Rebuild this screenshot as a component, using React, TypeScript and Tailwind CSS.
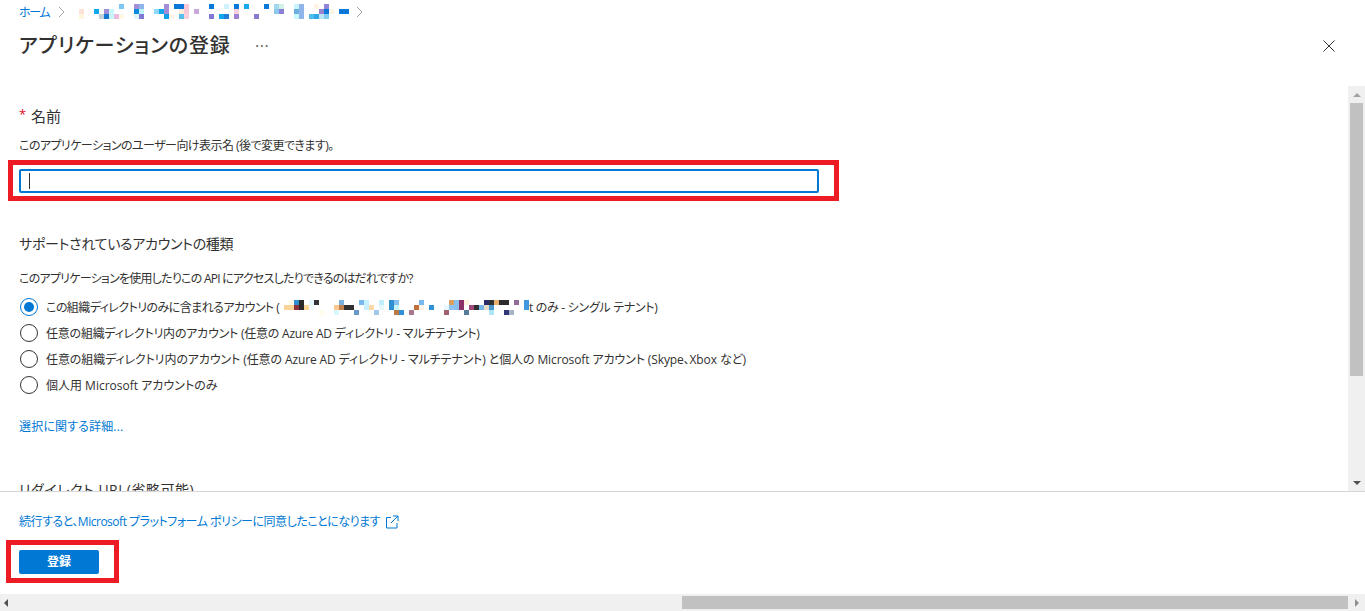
type Cell = [number, number, string];

// pixelated tenant name in the breadcrumb (x offset from 79, row 0-2)
const crumbCells: Cell[] = [
  [40, 0, "#7cc8f0"], [55, 0, "#a48fd6"], [60, 0, "#8fb4ea"], [85, 0, "#a48fd6"], [95, 0, "#0a78d8"], [100, 0, "#0a78d8"], [105, 0, "#f8c8d8"],
  [130, 0, "#0a78d8"], [145, 0, "#d0f2fc"], [155, 0, "#0a78d8"], [165, 0, "#18a8ec"], [185, 0, "#0a78d8"], [195, 0, "#a4d8ee"], [200, 0, "#d0f4e4"],
  [215, 0, "#c8f4fc"], [220, 0, "#8fb4ea"], [235, 0, "#fdf2e4"], [245, 0, "#9484d8"],
  [0, 1, "#fde2d8"], [15, 1, "#10a8ec"], [25, 1, "#a48fd6"], [30, 1, "#c8f4fc"], [55, 1, "#0a8ae0"], [60, 1, "#c0f2fc"],
  [75, 1, "#8cd8f8"], [80, 1, "#10a8ec"], [85, 1, "#a48fd6"], [100, 1, "#fdeedc"], [105, 1, "#f8c8d8"], [115, 1, "#c8a8dc"],
  [155, 1, "#f8d0e0"], [195, 1, "#8cc8ec"], [200, 1, "#8a80d8"], [215, 1, "#6cb0e0"], [220, 1, "#8fb4ea"], [240, 1, "#9a84d0"], [245, 1, "#0a78d8"], [250, 1, "#fdf6e4"], [260, 1, "#0a78d8"], [265, 1, "#0a78d8"],
  [0, 2, "#fff6e0"], [20, 2, "#c4d0d8"], [25, 2, "#1478d0"], [30, 2, "#c8f4fc"], [35, 2, "#ecb8dc"], [40, 2, "#fff8e4"],
  [55, 2, "#dcf6fc"], [60, 2, "#8078d4"], [85, 2, "#10a0e8"], [90, 2, "#fff6e8"], [100, 2, "#58bce8"], [105, 2, "#f8d0e0"],
  [130, 2, "#8078d4"], [140, 2, "#10a8ec"], [145, 2, "#2080d8"], [155, 2, "#a080d0"], [175, 2, "#8a78d0"],
  [215, 2, "#c8f8fc"], [220, 2, "#8fb4ea"], [230, 2, "#50bcec"], [235, 2, "#30a8e8"], [240, 2, "#b8e4f4"], [245, 2, "#80ccf0"],
];

// pixelated tenant name in the first radio label (x offset from 284)
const tenantCells: Cell[] = [
  [5, 0, "#fdf6e4"], [10, 0, "#2f8fd0"], [15, 0, "#2a2a2a"], [25, 0, "#e4f8fc"], [30, 0, "#333333"],
  [55, 0, "#78b0e0"], [75, 0, "#78b8f0"], [80, 0, "#c8f0fc"], [95, 0, "#c0f0fc"], [105, 0, "#2f8fd0"], [110, 0, "#84c0f0"], [135, 0, "#78b8f0"],
  [165, 0, "#d8a060"], [170, 0, "#88c0f0"], [175, 0, "#8c3068"], [180, 0, "#fdf2dc"], [200, 0, "#2c2c68"], [205, 0, "#303030"], [210, 0, "#e8b070"], [215, 0, "#2c2c2c"], [220, 0, "#2c2c2c"], [230, 0, "#906c98"], [240, 0, "#4098e0"],
  [0, 1, "#fdd498"], [5, 1, "#fdd498"], [10, 1, "#8e2f3a"], [15, 1, "#2a2a2a"], [20, 1, "#fdd498"], [25, 1, "#f0fafc"],
  [50, 1, "#fdc890"], [55, 1, "#c08050"], [60, 1, "#303030"], [65, 1, "#303030"], [80, 1, "#c8f0fc"], [85, 1, "#fdd8a8"], [95, 1, "#e4f8fc"], [105, 1, "#2f8fd0"], [110, 1, "#c8f4fc"],
  [130, 1, "#c07038"], [135, 1, "#fdf2e4"], [145, 1, "#3090d8"], [160, 1, "#e8f8fc"], [165, 1, "#90c4f0"], [170, 1, "#88c0f0"], [175, 1, "#8c3068"], [185, 1, "#a04878"], [190, 1, "#303030"], [195, 1, "#78b8e8"], [200, 1, "#e8dcc8"], [205, 1, "#4898d0"], [240, 1, "#4098e0"],
  [35, 2, "#fffcec"], [50, 2, "#d8f8fc"], [70, 2, "#6898c8"], [90, 2, "#a0c8ec"], [110, 2, "#b87848"], [115, 2, "#3090d8"], [125, 2, "#a87890"],
  [160, 2, "#a06070"], [180, 2, "#587c98"], [205, 2, "#b0e4f8"], [220, 2, "#303878"], [225, 2, "#a8b4c8"],
];

function Mosaic({ cells, width }: { cells: Cell[]; width: number }) {
  return (
    <svg width={width} height={15} viewBox={`0 0 ${width} 15`} shapeRendering="crispEdges" className="block shrink-0">
      {cells.map(([x, row, fill], i) => (
        <rect key={i} x={x} y={row * 5} width={5} height={5} fill={fill} />
      ))}
    </svg>
  );
}

function Chevron() {
  return (
    <svg width="7" height="12" viewBox="0 0 7 12" fill="none" className="block shrink-0">
      <path d="M1 1l5 5-5 5" stroke="#a6a6a6" strokeWidth="1" />
    </svg>
  );
}

function Radio({ checked }: { checked?: boolean }) {
  return (
    <span className={`flex h-[18px] w-[18px] shrink-0 items-center justify-center rounded-full border bg-white ${checked ? "border-[#0078d4]" : "border-[#333333]"}`}>
      {checked && <span className="h-[10px] w-[10px] rounded-full bg-[#0078d4]" />}
    </span>
  );
}

export default function App() {
  return (
    <div className="flex h-[611px] w-[1365px] flex-col overflow-hidden bg-white text-[12px] text-[#323130] [font-family:'Open_Sans','Noto_Sans_CJK_JP',sans-serif] [font-feature-settings:'palt']">
      <header className="h-[86px] shrink-0">
        <nav className="flex h-[24px] items-center pl-[19px] text-[#0078d4]">
          <a className="mt-[2px] w-[39px] tracking-[-1.3px]">ホーム</a>
          <Chevron />
          <span className="-mt-[1px] ml-[14px]"><Mosaic cells={crumbCells} width={275} /></span>
          <span className="ml-[2px]"><Chevron /></span>
        </nav>
        <div className="flex h-[44px] items-center pl-[19px] pr-[30px]">
          <h1 className="w-[237px] text-[20px] font-medium leading-none tracking-[0.9px] text-[#323130]">アプリケーションの登録</h1>
          <span className="-ml-[1px] text-[16px] leading-none tracking-[0.5px] text-[#605e5c]">···</span>
          <svg width="12" height="12" viewBox="0 0 12 12" className="ml-auto block" fill="none">
            <path d="M.5.5l11 11M11.5.5l-11 11" stroke="#323130" strokeWidth="1" />
          </svg>
        </div>
      </header>

      <div className="flex h-[405px] shrink-0">
        <main className="min-w-0 flex-1 overflow-hidden pt-[20px]">
          <label className="flex h-[20px] items-center pl-[19px] text-[15px]">
            <span className="-mt-[3px] w-[12px] text-[13px] font-normal text-[#e00b1c]">*</span>
            名前
          </label>
          <p className="mt-[11px] h-[18px] pl-[19px] leading-[18px] tracking-[-0.55px]">このアプリケーションのユーザー向け表示名 (後で変更できます)。</p>
          <div className="ml-[8px] mt-[5px] w-[831px] border-[5px] border-[#ed1c24] pb-[3px] pl-[6px] pr-[15px] pt-[4px]">
            <div className="flex h-[24px] items-center rounded-[2px] border-2 border-[#0078d4] px-[8px]">
              <span className="h-[16px] w-px bg-[#323130]" />
            </div>
          </div>

          <h2 className="ml-[19px] mt-[33px] h-[20px] text-[14px] leading-[20px] tracking-[-0.3px]">サポートされているアカウントの種類</h2>
          <p className="mt-[16px] h-[18px] pl-[19px] leading-[18px] tracking-[-0.75px]">このアプリケーションを使用したりこの API にアクセスしたりできるのはだれですか?</p>

          <ul className="ml-[20px] mt-[6px]">
            <li className="flex h-[26px] items-center">
              <Radio checked />
              <span className="ml-[8px] mt-[2px] w-[231px] whitespace-nowrap tracking-[-0.55px]">この組織ディレクトリのみに含まれるアカウント (</span>
              <span className="ml-[7px]"><Mosaic cells={tenantCells} width={245} /></span>
              <span className="mt-[2px] tracking-[-0.3px]">t のみ - シングル テナント)</span>
            </li>
            <li className="flex h-[26px] items-center gap-[8px]">
              <Radio />
              <span className="mt-[2px] tracking-[-0.23px]">任意の組織ディレクトリ内のアカウント (任意の Azure AD ディレクトリ - マルチテナント)</span>
            </li>
            <li className="flex h-[26px] items-center gap-[8px]">
              <Radio />
              <span className="mt-[2px] tracking-[-0.11px]">任意の組織ディレクトリ内のアカウント (任意の Azure AD ディレクトリ - マルチテナント) と個人の Microsoft アカウント (Skype、Xbox など)</span>
            </li>
            <li className="flex h-[26px] items-center gap-[8px]">
              <Radio />
              <span className="mt-[2px]">個人用 Microsoft アカウントのみ</span>
            </li>
          </ul>

          <a className="ml-[19px] mt-[20px] block h-[18px] leading-[18px] tracking-[0.15px] text-[#0078d4]">選択に関する詳細...</a>
          <h2 className="ml-[19px] mt-[44px] h-[20px] text-[14px] leading-[20px] tracking-[0.5px]">リダイレクト URI (省略可能)</h2>
        </main>

        <div className="flex w-[17px] shrink-0 flex-col items-center bg-[#f0f0f0]">
          <div className="flex h-[17px] w-full items-center justify-center">
            <svg width="8" height="4" viewBox="0 0 8 4"><path d="M4 0l4 4H0z" fill="#a3a3a3" /></svg>
          </div>
          <div className="h-[273px] w-[13px] bg-[#c1c1c1]" />
          <div className="mt-auto flex h-[17px] w-full items-center justify-center">
            <svg width="8" height="4" viewBox="0 0 8 4"><path d="M0 0h8L4 4z" fill="#505050" /></svg>
          </div>
        </div>
      </div>

      <footer className="h-[103px] shrink-0 border-t border-[#d6d6d6] pt-[21px]">
        <div className="flex h-[18px] items-center pl-[19px] text-[#0078d4]">
          <a className="tracking-[-0.48px]">続行すると、Microsoft プラットフォーム ポリシーに同意したことになります</a>
          <svg width="14" height="14" viewBox="0 0 14 14" fill="none" className="ml-[5px] block">
            <path d="M6 2.5H1.500V13H12V8M8 1h5v5M13 1L6 8" stroke="#0078d4" strokeWidth="1" />
          </svg>
        </div>
        <div className="ml-[6px] mt-[9px] w-[113px] border-[5px] border-[#ed1c24] pb-[4px] pl-[8px] pt-[5px]">
          <button className="flex h-[24px] w-[80px] items-center justify-center rounded-[2px] bg-[#0078d4] text-[12px] font-semibold text-white">登録</button>
        </div>
      </footer>

      <div className="flex h-[17px] shrink-0 items-center bg-[#f0f0f0]">
        <div className="flex w-[12px] justify-center">
          <svg width="4" height="8" viewBox="0 0 4 8"><path d="M4 0v8L0 4z" fill="#505050" /></svg>
        </div>
        <div className="ml-[670px] h-[13px] w-[666px] bg-[#c1c1c1]" />
        <div className="ml-auto flex w-[17px] justify-center">
          <svg width="4" height="8" viewBox="0 0 4 8"><path d="M0 0v8l4-4z" fill="#8f8f8f" /></svg>
        </div>
      </div>
    </div>
  );
}
